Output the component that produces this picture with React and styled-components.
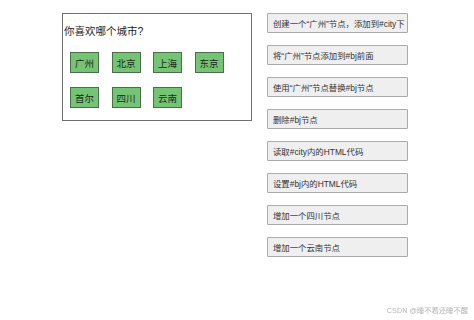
import React from "react";
import styled, { createGlobalStyle } from "styled-components";

const cities = ["广州", "北京", "上海", "东京", "首尔", "四川", "云南"];

const actions = [
  "创建一个“广州”节点，添加到#city下",
  "将“广州”节点添加到#bj前面",
  "使用“广州”节点替换#bj节点",
  "删除#bj节点",
  "读取#city内的HTML代码",
  "设置#bj内的HTML代码",
  "增加一个四川节点",
  "增加一个云南节点",
];

const App = () => {
  return (
    <Page>
      <GlobalStyle />
      <CityBox>
        <Question>你喜欢哪个城市?</Question>
        <CityList>
          {cities.map((city) => (
            <City key={city}>{city}</City>
          ))}
        </CityList>
      </CityBox>

      <Actions>
        {actions.map((label) => (
          <ActionButton key={label}>{label}</ActionButton>
        ))}
      </Actions>

      <Watermark>CSDN @睡不着还睡不醒</Watermark>
    </Page>
  );
};

const GlobalStyle = createGlobalStyle`
  html, body {
    margin: 0;
    padding: 0;
    background: #fff;
  }
  body {
    font-family: "Liberation Sans", "Noto Sans CJK SC", sans-serif;
  }
`;

const Page = styled.div`
  display: flex;
  align-items: flex-start;
  gap: 15px;
  padding: 13px 0 0 62px;
  height: 320px;
  box-sizing: border-box;
`;

const CityBox = styled.div`
  width: 190px;
  height: 108px;
  box-sizing: border-box;
  border: 1px solid #6e6e6e;
`;

const Question = styled.div`
  margin: 10px 0 0 1px;
  font-size: 10.5px;
  line-height: 14px;
  color: #222;
`;

const CityList = styled.div`
  display: flex;
  flex-wrap: wrap;
  gap: 14px 12.5px;
  padding: 14px 0 0 7px;
`;

const City = styled.div`
  width: 29px;
  height: 21px;
  box-sizing: border-box;
  display: flex;
  align-items: center;
  justify-content: center;
  background: #74c474;
  border: 1px solid #4d6e4d;
  font-size: 9.5px;
  color: #1d2a1d;
`;

const Actions = styled.div`
  display: flex;
  flex-direction: column;
  gap: 12px;
`;

const ActionButton = styled.button`
  width: 141px;
  height: 20px;
  box-sizing: border-box;
  padding: 0 0 0 5px;
  text-align: left;
  white-space: nowrap;
  overflow: hidden;
  background: #efefef;
  border: 1px solid #a9a9a9;
  border-radius: 1px;
  font-family: "Liberation Sans", "Noto Sans CJK SC", sans-serif;
  font-size: 8.4px;
  color: #333;
`;

const Watermark = styled.div`
  position: fixed;
  right: 6px;
  bottom: 5px;
  font-size: 7.3px;
  color: #b5b5b5;
`;

export default App;
